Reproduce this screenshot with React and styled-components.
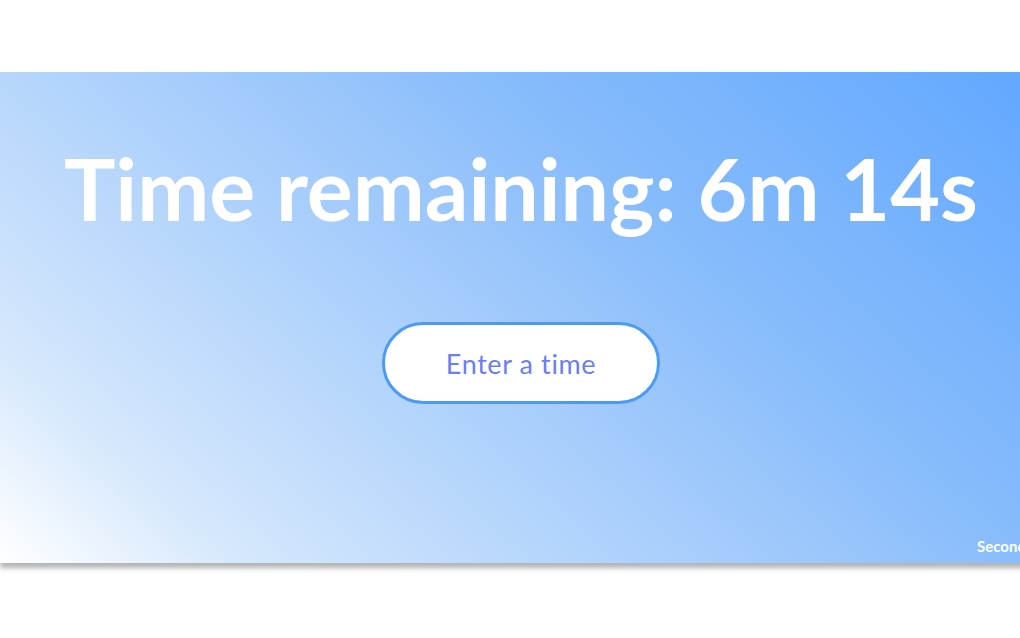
import React from "react";
import styled, { createGlobalStyle } from "styled-components";

const Global = createGlobalStyle`
  html, body { margin: 0; padding: 0; background: #ffffff; }
  body { font-family: "Lato", "Noto Sans", sans-serif; }
`;

const Page = styled.div`
  width: 1020px;
  height: 638px;
  padding-top: 72px;
  box-sizing: border-box;
  overflow: hidden;
  background: #ffffff;
`;

const Panel = styled.section`
  position: relative;
  width: 1042px;
  height: 491px;
  background: linear-gradient(
    42deg,
    #ffffff 0%,
    #d6e8fc 15%,
    #bcd9fc 31%,
    #88bcfb 65%,
    #64a9ff 97%
  );
  box-shadow: 0 5px 5px rgba(0, 0, 0, 0.3);
  display: flex;
  flex-direction: column;
  align-items: center;
`;

const Title = styled.h1`
  margin: 73px 0 0;
  font-family: "Lato", "Noto Sans", sans-serif;
  font-weight: 700;
  font-size: 86px;
  line-height: 1;
  color: #ffffff;
  white-space: nowrap;
`;

const TimeButton = styled.button`
  margin-top: 91px;
  width: 278px;
  height: 82px;
  border-radius: 41px;
  border: 3px solid #4b9bf5;
  background: #ffffff;
  color: #6b7ef2;
  font-family: "Lato", "Noto Sans", sans-serif;
  font-size: 27px;
  letter-spacing: 0.6px;
  font-weight: 400;
  cursor: pointer;
`;

const Corner = styled.span`
  position: absolute;
  left: 977px;
  top: 465px;
  font-family: "Lato", "Noto Sans", sans-serif;
  font-weight: 700;
  font-size: 15px;
  color: #ffffff;
  white-space: nowrap;
`;

export default function App() {
  return (
    <>
      <Global />
      <Page>
        <Panel>
          <Title>Time remaining: 6m 14s</Title>
          <TimeButton>Enter a time</TimeButton>
          <Corner>Seconds</Corner>
        </Panel>
      </Page>
    </>
  );
}
